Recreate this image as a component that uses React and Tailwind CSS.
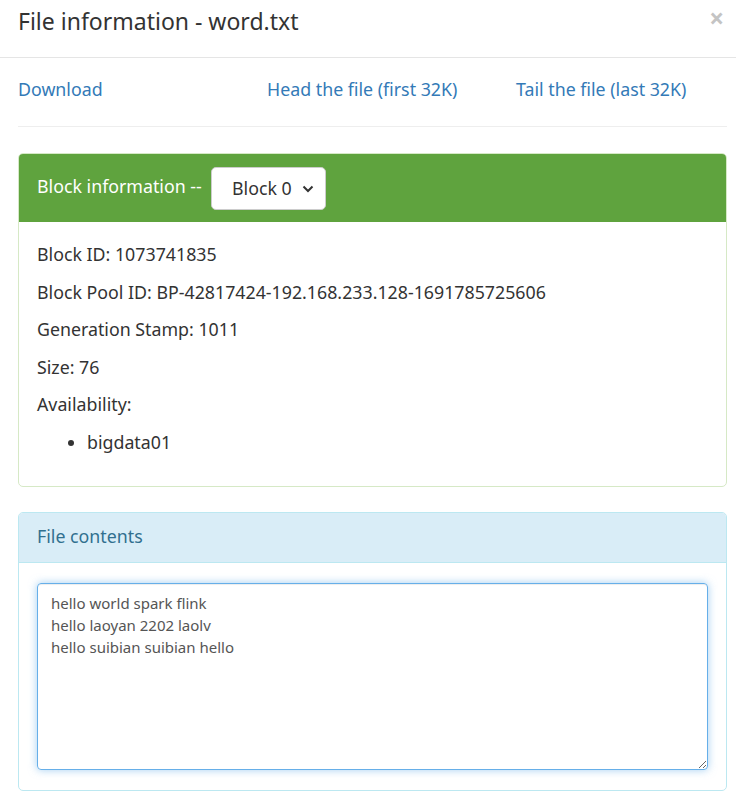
import React, { useState } from 'react';

const font = { fontFamily: '"Noto Sans", "Open Sans", Arial, sans-serif' };

export default function App() {
  const [block, setBlock] = useState('0');

  const info = [
    'Block ID: 1073741835',
    'Block Pool ID: BP-42817424-192.168.233.128-1691785725606',
    'Generation Stamp: 1011',
    'Size: 76',
  ];

  return (
    <div className="w-[736px] h-[793px] bg-white text-[#333] overflow-hidden" style={font}>
      {/* header */}
      <div className="h-[58px] flex items-center justify-between pl-[18px] pr-[12px] border-b border-[#e5e5e5]">
        <h4 className="text-[23px] leading-none text-[#333] -mt-[14px]">File information - word.txt</h4>
        <button className="text-[26px] leading-none font-bold text-[#c4c4c4] -mt-[22px]">×</button>
      </div>

      {/* body */}
      <div className="pl-[18px] pr-[9px]">
        <div className="grid grid-cols-[249px_249px_1fr] h-[69px] items-center text-[17.8px] text-[#337ab7] border-b border-[#eee]">
          <a href="#" className="-mt-[6px]">Download</a>
          <a href="#" className="-mt-[6px]">Head the file (first 32K)</a>
          <a href="#" className="-mt-[6px]">Tail the file (last 32K)</a>
        </div>

        {/* block info */}
        <div className="mt-[26px] border border-[#d6e9c6] rounded-[5px] overflow-hidden">
          <div className="h-[68px] bg-[#5fa33e] text-white flex items-center px-[18px] text-[17.8px]">
            <span className="-mt-[4px] w-[174px] whitespace-nowrap">Block information --</span>
            <div className="relative">
              <select
                value={block}
                onChange={e => setBlock(e.target.value)}
                className="appearance-none bg-white text-[#333] text-[17.8px] h-[43px] w-[115px] pl-[20px] rounded-[5px] border border-[#ccc] outline-none"
                style={font}
              >
                <option value="0">Block 0</option>
              </select>
              <svg className="absolute right-[12px] top-[18px] pointer-events-none" width="12" height="8" viewBox="0 0 12 8">
                <path d="M1.5 1.5 L6 6 L10.5 1.5" fill="none" stroke="#333" strokeWidth="2" />
              </svg>
            </div>
          </div>
          <div className="px-[18px] pt-[20px] pb-[31px] text-[17.8px]">
            {info.map(t => (
              <p key={t} className="h-[25px] leading-[25px] mb-[12.5px] whitespace-nowrap">{t}</p>
            ))}
            <p className="h-[25px] leading-[25px] mb-[12.5px]">Availability:</p>
            <ul className="list-disc pl-[50px]">
              <li className="leading-[25px]">bigdata01</li>
            </ul>
          </div>
        </div>

        {/* file contents */}
        <div className="mt-[25px] border border-[#bce8f1] rounded-[5px] overflow-hidden">
          <div className="h-[50px] bg-[#d9edf7] text-[#31708f] flex items-center px-[18px] text-[17.8px] border-b border-[#bce8f1]">
            <span className="-mt-[2px]">File contents</span>
          </div>
          <div className="px-[18px] pt-[20px] pb-[20px]">
            <textarea
              className="block w-[671px] h-[187px] rounded-[4px] border border-[#66afe9] px-[13px] py-[8px] text-[15px] leading-[22px] text-[#555] outline-none shadow-[inset_0_1px_1px_rgba(0,0,0,0.075),0_0_8px_rgba(102,175,233,0.6)]"
              style={font}
              defaultValue={'hello world spark flink\nhello laoyan 2202 laolv\nhello suibian suibian hello'}
            />
          </div>
        </div>
      </div>
    </div>
  );
}
